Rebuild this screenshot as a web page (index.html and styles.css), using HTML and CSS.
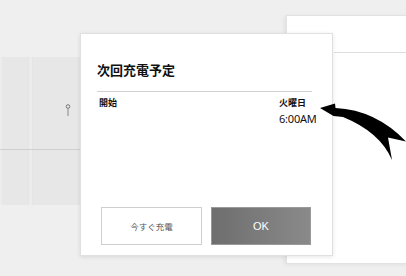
FILE: index.html
```html
<!DOCTYPE html>
<html lang="ja">
<head>
<meta charset="utf-8">
<link rel="stylesheet" href="styles.css">
</head>
<body>
<div class="screen">
  <div class="backdrop">
    <div class="left-panel">
      <div class="lp-col lp-a"></div>
      <div class="lp-stripe"></div>
      <div class="lp-col lp-b">
        <svg class="pin" width="6" height="12" viewBox="0 0 6 12"><circle cx="3" cy="2.5" r="1.8" fill="none" stroke="#777" stroke-width="1"/><line x1="3" y1="4.3" x2="3" y2="12" stroke="#888" stroke-width="1"/></svg>
      </div>
      <div class="lp-line"></div>
    </div>
  </div>

  <div class="side-card">
    <div class="side-line"></div>
  </div>

  <div class="dialog">
    <h1 class="title">次回充電予定</h1>
    <div class="divider"></div>
    <div class="row">
      <div class="label">開始</div>
      <div class="value">
        <div class="day">火曜日</div>
        <div class="time">6:00AM</div>
      </div>
    </div>
    <div class="actions">
      <button class="btn btn-secondary">今すぐ充電</button>
      <button class="btn btn-primary">OK</button>
    </div>
  </div>

  <svg class="arrow" width="92" height="64" viewBox="316 100 92 64">
    <path d="M320,108 L335,103.5 L335.5,108 Q376,110 406,141.5 L388,137.5 L392,160 Q380,132 343,117 L333.5,116 Z" fill="#000"/>
  </svg>
</div>
</body>
</html>
```

FILE: styles.css
```css
* { box-sizing: border-box; }
html, body { margin: 0; padding: 0; }
body {
  font-family: "Noto Sans CJK JP", "Noto Sans", sans-serif;
  background: #efefef;
}
.screen {
  position: relative;
  width: 406px;
  height: 276px;
  overflow: hidden;
  background: #efefef;
}
.backdrop {
  padding-top: 57px;
}
.left-panel {
  position: relative;
  width: 80px;
  height: 148px;
  display: grid;
  grid-template-columns: 26px 5px 1fr;
  background: #e7e7e7;
  border-left: 2px solid #ececec;
}
.lp-stripe {
  background: #ececec;
  border-left: 1px solid #e4e4e4;
  border-right: 1px solid #e4e4e4;
}
.lp-b {
  display: flex;
  justify-content: flex-end;
  padding-top: 47px;
  padding-right: 9px;
}
.pin { display: block; }
.lp-line {
  position: absolute;
  left: -2px;
  right: 0;
  top: 92px;
  height: 1px;
  background: #cfcfcf;
}
.side-card {
  position: absolute;
  left: 286px;
  top: 15px;
  right: -4px;
  height: 249px;
  background: #fff;
  border: 1px solid #e2e2e2;
  box-shadow: -2px 1px 4px rgba(0,0,0,0.06);
}
.side-line {
  margin-top: 36px;
  margin-left: 47px;
  height: 1px;
  background: #dedede;
}
.dialog {
  position: absolute;
  left: 80px;
  top: 33px;
  width: 253px;
  height: 223px;
  background: #fff;
  border: 1px solid #e0e0e0;
  box-shadow: 0 1px 4px rgba(0,0,0,0.10);
  padding: 26px 19px 0 16px;
  display: flex;
  flex-direction: column;
}
.title {
  margin: 0;
  font-size: 13px;
  font-weight: 700;
  line-height: 20px;
  color: #111;
}
.divider {
  margin-top: 11px;
  margin-right: 1px;
  height: 1px;
  background: #d2d2d2;
}
.row {
  display: flex;
  justify-content: space-between;
  padding: 5px 0 0 2px;
}
.label, .day {
  font-size: 9px;
  font-weight: 700;
  line-height: 12px;
  color: #111;
}
.value {
  width: 34px;
  white-space: nowrap;
}
.time {
  margin-top: 3px;
  font-family: "Noto Sans", sans-serif;
  font-size: 11px;
  line-height: 14px;
  color: #111;
  letter-spacing: -0.2px;
}
.actions {
  margin-top: auto;
  margin-bottom: 10px;
  display: flex;
  gap: 9px;
  padding-left: 4px;
}
.btn {
  height: 38px;
  width: 101px;
  font-family: inherit;
  margin: 0;
  padding: 0;
}
.btn-secondary {
  background: #fff;
  border: 1px solid #cfcfcf;
  color: #555;
  font-size: 8.5px;
}
.btn-primary {
  width: 100px;
  border: 1px solid #999;
  background: linear-gradient(to right, #6e6e6e, #8a8a8a);
  color: #fff;
  font-size: 11px;
  font-family: "Liberation Sans", sans-serif;
}
.arrow {
  position: absolute;
  left: 316px;
  top: 100px;
}
```
